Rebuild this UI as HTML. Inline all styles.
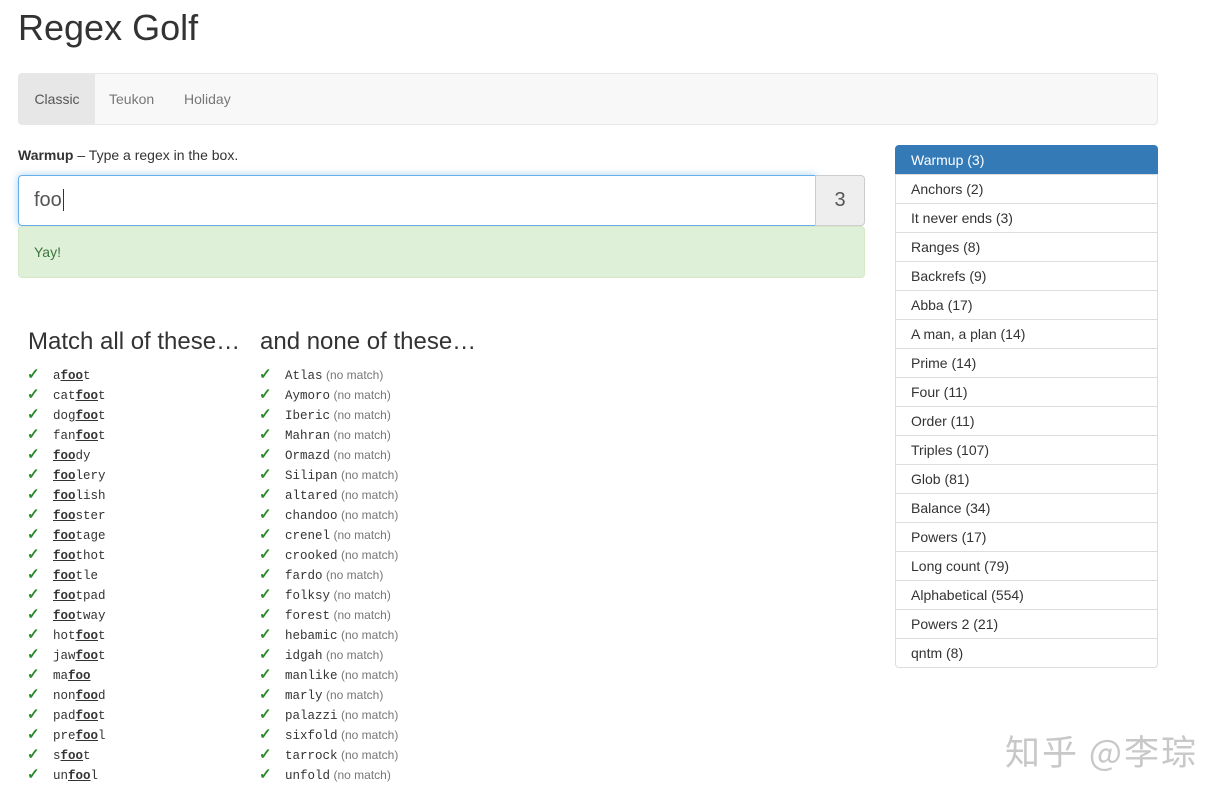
<!DOCTYPE html>
<html><head><meta charset="utf-8"><style>
*{box-sizing:border-box;margin:0;padding:0}
body{width:1232px;height:798px;background:#fff;font-family:"Liberation Sans",sans-serif;color:#333;position:relative;overflow:hidden}
h1{position:absolute;left:18px;top:7px;font-size:36px;font-weight:normal;color:#333}
.nav{position:absolute;left:18px;top:73px;width:1140px;height:52px;background:#f8f8f8;border:1px solid #e7e7e7;border-radius:4px}
.nav span{position:absolute;top:0;height:50px;line-height:50px;font-size:14px;color:#777}
.nav .act{background:#e7e7e7;color:#555;left:0;width:76px;text-align:center}
.desc{position:absolute;left:18px;top:147px;font-size:14px}
.inp{position:absolute;left:18px;top:175px;width:798px;height:51px;border:1px solid #66afe9;border-radius:4px 0 0 4px;box-shadow:0 0 8px rgba(102,175,233,.6);font-size:20px;padding:0 0 0 15px;line-height:49px;color:#555}
.cnt{position:absolute;left:815px;top:175px;width:50px;height:51px;background:#eee;border:1px solid #ccc;border-radius:0 4px 4px 0;text-align:center;line-height:49px;font-size:20px;color:#555}
.yay{position:absolute;left:18px;top:226px;width:847px;height:52px;background:#dff0d8;border:1px solid #d6e9c6;border-radius:4px;color:#3c763d;font-size:14px;padding-left:15px;line-height:50px}
h2{position:absolute;top:328px;font-size:24px;font-weight:normal;color:#333}
.col{position:absolute;top:365px;font-size:12.5px;line-height:20px}
.col div{height:20px;white-space:nowrap}
.ck{color:#2c8a2c;display:inline-block;font-weight:bold;font-size:15px}
.w{font-family:"Liberation Mono",monospace;color:#333}
.w b{text-decoration:underline}
.nm{color:#777;font-size:12px}
.list{position:absolute;left:895px;top:145px;width:263px}
.list div{height:30px;border:1px solid #ddd;margin-bottom:-1px;line-height:28px;padding-left:15px;font-size:14px;color:#333;background:#fff}
.list div:first-child{background:#337ab7;border-color:#337ab7;color:#fff;border-radius:4px 4px 0 0}
.list div:last-child{border-radius:0 0 4px 4px}
.wm{position:absolute;left:1005px;top:725px;font-size:35px;color:#c8c8c8;font-family:"Noto Sans CJK SC",sans-serif;letter-spacing:2px;white-space:nowrap}
</style></head><body>
<h1>Regex Golf</h1>
<div class="nav"><span class="act">Classic</span><span style="left:90px">Teukon</span><span style="left:165px">Holiday</span></div>
<div class="desc"><b>Warmup</b> – Type a regex in the box.</div>
<div class="inp">foo<span style="border-left:1px solid #333;margin-left:1px"></span></div>
<div class="cnt">3</div>
<div class="yay">Yay!</div>
<h2 style="left:28px">Match all of these…</h2>
<h2 style="left:260px">and none of these…</h2>
<div class="col" style="left:27px">
<div><span class="ck" style="width:26px">✓</span><span class="w">a<b>foo</b>t</span></div>
<div><span class="ck" style="width:26px">✓</span><span class="w">cat<b>foo</b>t</span></div>
<div><span class="ck" style="width:26px">✓</span><span class="w">dog<b>foo</b>t</span></div>
<div><span class="ck" style="width:26px">✓</span><span class="w">fan<b>foo</b>t</span></div>
<div><span class="ck" style="width:26px">✓</span><span class="w"><b>foo</b>dy</span></div>
<div><span class="ck" style="width:26px">✓</span><span class="w"><b>foo</b>lery</span></div>
<div><span class="ck" style="width:26px">✓</span><span class="w"><b>foo</b>lish</span></div>
<div><span class="ck" style="width:26px">✓</span><span class="w"><b>foo</b>ster</span></div>
<div><span class="ck" style="width:26px">✓</span><span class="w"><b>foo</b>tage</span></div>
<div><span class="ck" style="width:26px">✓</span><span class="w"><b>foo</b>thot</span></div>
<div><span class="ck" style="width:26px">✓</span><span class="w"><b>foo</b>tle</span></div>
<div><span class="ck" style="width:26px">✓</span><span class="w"><b>foo</b>tpad</span></div>
<div><span class="ck" style="width:26px">✓</span><span class="w"><b>foo</b>tway</span></div>
<div><span class="ck" style="width:26px">✓</span><span class="w">hot<b>foo</b>t</span></div>
<div><span class="ck" style="width:26px">✓</span><span class="w">jaw<b>foo</b>t</span></div>
<div><span class="ck" style="width:26px">✓</span><span class="w">ma<b>foo</b></span></div>
<div><span class="ck" style="width:26px">✓</span><span class="w">non<b>foo</b>d</span></div>
<div><span class="ck" style="width:26px">✓</span><span class="w">pad<b>foo</b>t</span></div>
<div><span class="ck" style="width:26px">✓</span><span class="w">pre<b>foo</b>l</span></div>
<div><span class="ck" style="width:26px">✓</span><span class="w">s<b>foo</b>t</span></div>
<div><span class="ck" style="width:26px">✓</span><span class="w">un<b>foo</b>l</span></div>
</div>
<div class="col" style="left:259px">
<div><span class="ck" style="width:26px">✓</span><span class="w">Atlas</span> <span class="nm">(no match)</span></div>
<div><span class="ck" style="width:26px">✓</span><span class="w">Aymoro</span> <span class="nm">(no match)</span></div>
<div><span class="ck" style="width:26px">✓</span><span class="w">Iberic</span> <span class="nm">(no match)</span></div>
<div><span class="ck" style="width:26px">✓</span><span class="w">Mahran</span> <span class="nm">(no match)</span></div>
<div><span class="ck" style="width:26px">✓</span><span class="w">Ormazd</span> <span class="nm">(no match)</span></div>
<div><span class="ck" style="width:26px">✓</span><span class="w">Silipan</span> <span class="nm">(no match)</span></div>
<div><span class="ck" style="width:26px">✓</span><span class="w">altared</span> <span class="nm">(no match)</span></div>
<div><span class="ck" style="width:26px">✓</span><span class="w">chandoo</span> <span class="nm">(no match)</span></div>
<div><span class="ck" style="width:26px">✓</span><span class="w">crenel</span> <span class="nm">(no match)</span></div>
<div><span class="ck" style="width:26px">✓</span><span class="w">crooked</span> <span class="nm">(no match)</span></div>
<div><span class="ck" style="width:26px">✓</span><span class="w">fardo</span> <span class="nm">(no match)</span></div>
<div><span class="ck" style="width:26px">✓</span><span class="w">folksy</span> <span class="nm">(no match)</span></div>
<div><span class="ck" style="width:26px">✓</span><span class="w">forest</span> <span class="nm">(no match)</span></div>
<div><span class="ck" style="width:26px">✓</span><span class="w">hebamic</span> <span class="nm">(no match)</span></div>
<div><span class="ck" style="width:26px">✓</span><span class="w">idgah</span> <span class="nm">(no match)</span></div>
<div><span class="ck" style="width:26px">✓</span><span class="w">manlike</span> <span class="nm">(no match)</span></div>
<div><span class="ck" style="width:26px">✓</span><span class="w">marly</span> <span class="nm">(no match)</span></div>
<div><span class="ck" style="width:26px">✓</span><span class="w">palazzi</span> <span class="nm">(no match)</span></div>
<div><span class="ck" style="width:26px">✓</span><span class="w">sixfold</span> <span class="nm">(no match)</span></div>
<div><span class="ck" style="width:26px">✓</span><span class="w">tarrock</span> <span class="nm">(no match)</span></div>
<div><span class="ck" style="width:26px">✓</span><span class="w">unfold</span> <span class="nm">(no match)</span></div>
</div>
<div class="list">
<div>Warmup (3)</div><div>Anchors (2)</div><div>It never ends (3)</div><div>Ranges (8)</div><div>Backrefs (9)</div><div>Abba (17)</div><div>A man, a plan (14)</div><div>Prime (14)</div><div>Four (11)</div><div>Order (11)</div><div>Triples (107)</div><div>Glob (81)</div><div>Balance (34)</div><div>Powers (17)</div><div>Long count (79)</div><div>Alphabetical (554)</div><div>Powers 2 (21)</div><div>qntm (8)</div>
</div>
<div class="wm">知乎 @李琮</div>
</body></html>
